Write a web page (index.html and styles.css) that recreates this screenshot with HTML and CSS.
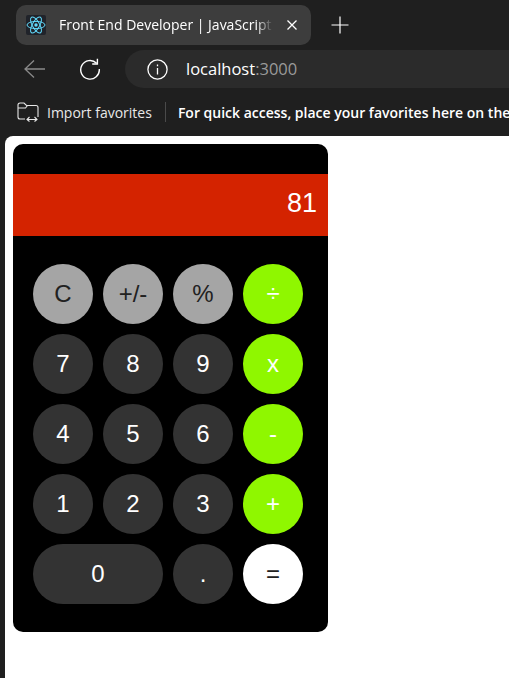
FILE: index.html
```html
<!DOCTYPE html>
<html lang="en">
<head>
    <meta charset="UTF-8">
    <meta name="viewport" content="width=device-width, initial-scale=1.0">
    <title>Front End Developer | JavaScript</title>
    <link rel="stylesheet" href="styles.css">
</head>
<body>
    <div class="tabstrip">
        <div class="tab">
            <span class="favicon">
                <svg width="20" height="20" viewBox="0 0 20 20" fill="none" stroke="#61dafb" stroke-width="1">
                    <ellipse cx="10" cy="10" rx="9" ry="3.6"/>
                    <ellipse cx="10" cy="10" rx="9" ry="3.6" transform="rotate(60 10 10)"/>
                    <ellipse cx="10" cy="10" rx="9" ry="3.6" transform="rotate(120 10 10)"/>
                    <circle cx="10" cy="10" r="1.7" fill="#61dafb" stroke="none"/>
                </svg>
            </span>
            <span class="tab-title">Front End Developer | JavaScript</span>
            <svg class="tab-close" width="12" height="12" viewBox="0 0 12 12" stroke="#fff" stroke-width="1.3">
                <path d="M1.5 1.5l9 9M10.5 1.5l-9 9"/>
            </svg>
        </div>
        <svg class="new-tab" width="18" height="18" viewBox="0 0 18 18" stroke="#fff" stroke-width="1.2">
            <path d="M9 0.5v17M0.5 9h17"/>
        </svg>
    </div>

    <div class="toolbar">
        <svg class="back" width="22" height="20" viewBox="0 0 22 20" fill="none" stroke="#8a8a8a" stroke-width="1.3">
            <path d="M1 10h20M10 1.5L1 10l9 8.5"/>
        </svg>
        <svg class="reload" width="22" height="22" viewBox="0 0 22 22" fill="none" stroke="#fff" stroke-width="1.4">
            <path d="M17.6 5.2A9.3 9.3 0 1 0 20.3 11"/>
            <path d="M18.4 0.8v5.2h-5.2"/>
        </svg>
        <div class="address">
            <svg width="21" height="21" viewBox="0 0 21 21" fill="none" stroke="#fff" stroke-width="1.3">
                <circle cx="10.5" cy="10.5" r="9.6"/>
                <path d="M10.5 9v6.5M10.5 5.6v1.6"/>
            </svg>
            <span class="url">localhost<span class="port">:3000</span></span>
        </div>
    </div>

    <div class="favbar">
        <svg class="fav-icon" width="22" height="20" viewBox="0 0 22 20" fill="none" stroke="#e8e8e8" stroke-width="1.1">
            <path d="M8 17H3a2 2 0 0 1-2-2V3a2 2 0 0 1 2-2h4l2.5 2.5H19a2 2 0 0 1 2 2V15"/>
            <path d="M1 6h7.5l2-2.5"/>
            <path d="M10 17.5h10M12.5 15l-2.5 2.5 2.5 2M17.5 15l2.5 2.5-2.5 2"/>
        </svg>
        <span class="import">Import favorites</span>
        <span class="divider"></span>
        <span class="hint">For quick access, place your favorites here on the</span>
    </div>

    <div class="page">
        <div class="calculator">
            <div class="display">81</div>
            <div class="keys">
                <button class="key key-gray">C</button>
                <button class="key key-gray">+/-</button>
                <button class="key key-gray">%</button>
                <button class="key key-op">÷</button>
                <button class="key">7</button>
                <button class="key">8</button>
                <button class="key">9</button>
                <button class="key key-op">x</button>
                <button class="key">4</button>
                <button class="key">5</button>
                <button class="key">6</button>
                <button class="key key-op">-</button>
                <button class="key">1</button>
                <button class="key">2</button>
                <button class="key">3</button>
                <button class="key key-op">+</button>
                <button class="key key-zero">0</button>
                <button class="key">.</button>
                <button class="key key-equals">=</button>
            </div>
        </div>
    </div>
</body>
</html>
```

FILE: styles.css
```css
html, body {
    height: 100%;
}

body {
    margin: 0;
    background-color: #1f1f1f;
    font-family: "Open Sans", "Noto Sans", sans-serif;
    overflow: hidden;
    display: flex;
    flex-direction: column;
}

/* browser chrome */
.tabstrip {
    height: 50px;
    flex: none;
    box-sizing: border-box;
    padding: 5px 0 5px 16px;
    display: flex;
    align-items: center;
}

.tab {
    width: 295px;
    height: 40px;
    box-sizing: border-box;
    padding: 0 12px 0 10px;
    background-color: #3d3d3d;
    border-radius: 10px;
    display: flex;
    align-items: center;
}

.favicon {
    width: 20px;
    height: 20px;
    background-color: #20232a;
    border-radius: 2px;
    flex: none;
}

.tab-title {
    margin-left: 13px;
    margin-bottom: 2px;
    width: 214px;
    flex: none;
    overflow: hidden;
    white-space: nowrap;
    color: #fff;
    font-size: 14px;
    -webkit-mask-image: linear-gradient(to right, #000 92%, transparent);
    mask-image: linear-gradient(to right, #000 92%, transparent);
}

.tab-close {
    margin-left: 13px;
    flex: none;
}

.new-tab {
    margin-left: 20px;
}

.toolbar {
    height: 38px;
    flex: none;
    display: flex;
    align-items: center;
    padding-left: 24px;
    background-color: #1f1f1f;
}

.reload {
    margin-left: 33px;
}

.address {
    margin-left: 24px;
    flex: 1;
    height: 38px;
    background-color: #2b2b2b;
    border-radius: 19px 0 0 19px;
    display: flex;
    align-items: center;
    padding-left: 22px;
}

.url {
    margin-left: 18px;
    margin-bottom: 2px;
    color: #fff;
    font-size: 16.5px;
}

.port {
    color: #9a9a9a;
}

.favbar {
    height: 48px;
    flex: none;
    display: flex;
    align-items: center;
    padding-left: 17px;
    color: #fff;
    font-size: 14px;
    white-space: nowrap;
    overflow: hidden;
}

.fav-icon {
    flex: none;
}

.import {
    margin-left: 8px;
    color: #e8e8e8;
}

.divider {
    width: 1px;
    height: 20px;
    margin: 0 12px 0 13px;
    background-color: #4a4a4a;
    flex: none;
}

.hint {
    font-weight: 600;
}

/* page */
.page {
    flex: 1;
    margin-left: 5px;
    padding: 8px;
    background-color: #fff;
    border-top-left-radius: 8px;
}

.calculator {
    width: 315px;
    height: 488px;
    box-sizing: border-box;
    padding-top: 30px;
    background-color: #000;
    border-radius: 10px;
}

.display {
    height: 62px;
    box-sizing: border-box;
    padding-right: 11px;
    background-color: #d42300;
    color: #fff;
    font-family: "Liberation Sans", Arial, sans-serif;
    font-size: 27px;
    line-height: 58px;
    text-align: right;
}

.keys {
    margin-top: 28px;
    padding-left: 20px;
    display: grid;
    grid-template-columns: repeat(4, 60px);
    grid-auto-rows: 60px;
    gap: 10px;
}

.key {
    padding: 0;
    border: none;
    border-radius: 30px;
    background-color: #333;
    color: #fff;
    font-family: "Liberation Sans", Arial, sans-serif;
    font-size: 24px;
}

.key-gray {
    background-color: #a5a5a5;
    color: #212121;
}

.key-op {
    background-color: #8ff700;
}

.key-zero {
    grid-column: span 2;
}

.key-equals {
    background-color: #fff;
    color: #212121;
}
```
